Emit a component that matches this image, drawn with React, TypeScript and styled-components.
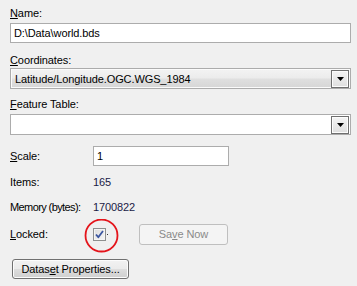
import React from 'react';
import styled, { createGlobalStyle, css } from 'styled-components';

const UI_FONT = '"Liberation Sans", Arial, sans-serif';

const GlobalStyle = createGlobalStyle`
  html, body {
    margin: 0;
    padding: 0;
    background: #f0f0f0;
  }
  body {
    font-family: ${UI_FONT};
    font-size: 11px;
    letter-spacing: -0.1px;
    color: #000;
  }
`;

const Panel = styled.div`
  width: 357px;
  height: 286px;
  box-sizing: border-box;
  padding: 7px 6px 0 10px;
  display: flex;
  flex-direction: column;
  overflow: hidden;
`;

const FieldLabel = styled.div<{ $top?: number }>`
  line-height: 13px;
  height: 13px;
  margin-top: ${(p) => p.$top ?? 0}px;
  white-space: nowrap;
`;

const Key = styled.u`
  text-decoration: underline;
  text-underline-offset: 1px;
`;

const inputBorder = css`
  box-sizing: border-box;
  border: 1px solid #acacac;
`;

const TextBox = styled.div<{ $top?: number; $width?: number }>`
  ${inputBorder}
  height: 20px;
  margin-top: ${(p) => p.$top ?? 0}px;
  width: ${(p) => (p.$width ? `${p.$width}px` : 'auto')};
  background: #fff;
  padding: 0 3px;
  line-height: 18px;
  white-space: nowrap;
`;

const Combo = styled.div<{ $top?: number; $list?: boolean }>`
  ${inputBorder}
  height: 21px;
  margin-top: ${(p) => p.$top ?? 0}px;
  display: flex;
  align-items: center;
  justify-content: space-between;
  padding: 0 1px 0 4px;
  background: ${(p) =>
    p.$list
      ? 'linear-gradient(#f3f3f3 0%, #ececec 45%, #dfdfdf 55%, #d6d6d6 100%)'
      : '#fff'};
  box-shadow: ${(p) => (p.$list ? 'inset 0 0 0 1px #fbfbfb' : 'none')};
  white-space: nowrap;
`;

const DropButton = styled.div`
  box-sizing: border-box;
  width: 18px;
  height: 18px;
  border: 1px solid #6f6f6f;
  background: linear-gradient(#f4f4f4, #dedede);
  box-shadow: inset 0 0 0 1px #fcfcfc;
  display: flex;
  align-items: center;
  justify-content: center;
`;

const Row = styled.div<{ $top: number; $height: number }>`
  display: flex;
  align-items: center;
  height: ${(p) => p.$height}px;
  margin-top: ${(p) => p.$top}px;
  line-height: 13px;
  white-space: nowrap;
`;

const RowLabel = styled.span<{ $tight?: boolean }>`
  flex: 0 0 83px;
  width: 83px;
  letter-spacing: ${(p) => (p.$tight ? '-0.6px' : 'inherit')};
`;

const Value = styled.span`
  color: #1a1a46;
`;

const CheckWrap = styled.div`
  position: relative;
  width: 13px;
  height: 13px;
  flex: 0 0 13px;
`;

const CheckBox = styled.div`
  box-sizing: border-box;
  width: 13px;
  height: 13px;
  border: 1px solid #8e8f8f;
  background: linear-gradient(135deg, #dcdcdc, #f6f6f6);
  box-shadow: inset 0 0 0 1px #f4f4f4;
  display: flex;
  align-items: center;
  justify-content: center;
`;

const FocusDot = styled.span`
  position: absolute;
  left: 14px;
  top: 6px;
  width: 1px;
  height: 1px;
  background: #333;
`;

const Mark = styled.svg`
  position: absolute;
  left: -9px;
  top: -9px;
  pointer-events: none;
`;

const Button = styled.div<{ $disabled?: boolean; $width: number; $height: number; $left?: number }>`
  box-sizing: border-box;
  width: ${(p) => p.$width}px;
  height: ${(p) => p.$height}px;
  margin-left: ${(p) => p.$left ?? 0}px;
  border: 1px solid ${(p) => (p.$disabled ? '#bfbfbf' : '#707070')};
  border-radius: 3px;
  background: ${(p) =>
    p.$disabled
      ? '#f4f4f4'
      : 'linear-gradient(#f2f2f2 0%, #ebebeb 48%, #dddddd 52%, #cfcfcf 100%)'};
  box-shadow: inset 0 0 0 1px ${(p) => (p.$disabled ? '#f4f4f4' : '#fcfcfc')};
  color: ${(p) => (p.$disabled ? '#8a8a8a' : '#000')};
  display: flex;
  align-items: center;
  justify-content: center;
  white-space: nowrap;
`;

const ButtonRow = styled.div`
  display: flex;
  margin-top: 14px;
  padding-left: 2px;
`;

const Arrow = () => (
  <svg width="7" height="4" viewBox="0 0 7 4">
    <path d="M0 0H7L3.5 4Z" fill="#000" />
  </svg>
);

export default function App() {
  return (
    <>
      <GlobalStyle />
      <Panel>
        <FieldLabel>
          <Key>N</Key>ame:
        </FieldLabel>
        <TextBox $top={3}>D:\Data\world.bds</TextBox>

        <FieldLabel $top={11}>
          <Key>C</Key>oordinates:
        </FieldLabel>
        <Combo $top={1} $list>
          <span>Latitude/Longitude.OGC.WGS_1984</span>
          <DropButton>
            <Arrow />
          </DropButton>
        </Combo>

        <FieldLabel $top={9}>
          <Key>F</Key>eature Table:
        </FieldLabel>
        <Combo $top={3}>
          <span />
          <DropButton>
            <Arrow />
          </DropButton>
        </Combo>

        <Row $top={11} $height={20}>
          <RowLabel>
            <Key>S</Key>cale:
          </RowLabel>
          <TextBox $width={136}>1</TextBox>
        </Row>

        <Row $top={10} $height={13}>
          <RowLabel>Items:</RowLabel>
          <Value>165</Value>
        </Row>

        <Row $top={12} $height={13}>
          <RowLabel $tight>Memory (bytes):</RowLabel>
          <Value>1700822</Value>
        </Row>

        <Row $top={10} $height={21}>
          <RowLabel>
            <Key>L</Key>ocked:
          </RowLabel>
          <CheckWrap>
            <CheckBox>
              <svg width="9" height="9" viewBox="0 0 9 9">
                <path
                  d="M1 4.5L3.3 7.2L8 1"
                  fill="none"
                  stroke="#3b56a0"
                  strokeWidth="1.8"
                  strokeLinejoin="round"
                />
              </svg>
            </CheckBox>
            <FocusDot />
            <Mark width="36" height="36" viewBox="0 0 36 36">
              <ellipse cx="17.5" cy="16.5" rx="16" ry="16" fill="none" stroke="#e4141b" strokeWidth="1.8" />
            </Mark>
          </CheckWrap>
          <Button $disabled $width={89} $height={21} $left={33}>
            Sa<Key>v</Key>e Now
          </Button>
        </Row>

        <ButtonRow>
          <Button $width={117} $height={20}>
            Datas<Key>e</Key>t Properties...
          </Button>
        </ButtonRow>
      </Panel>
    </>
  );
}
